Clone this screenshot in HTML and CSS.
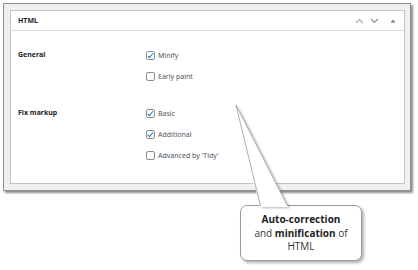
FILE: index.html
```html
<!DOCTYPE html>
<html lang="en">

<head>
    <meta charset="UTF-8">
    <title>HTML settings</title>
    <link rel="stylesheet" href="styles.css">
</head>

<body>
    <div class="stage">
        <div class="window">
            <div class="postbox">
                <div class="postbox-header">
                    <h2>HTML</h2>
                    <div class="handle-actions">
                        <svg width="9" height="6" viewBox="0 0 9 6"><polyline points="1,5 4.5,1.5 8,5" fill="none" stroke="#a7aaad" stroke-width="1.1"/></svg>
                        <svg width="9" height="6" viewBox="0 0 9 6"><polyline points="1,1 4.5,4.5 8,1" fill="none" stroke="#8c8f94" stroke-width="1.1"/></svg>
                        <svg width="6" height="4" viewBox="0 0 6 4"><polygon points="3,0.5 5.5,3.5 0.5,3.5" fill="#787c82"/></svg>
                    </div>
                </div>
                <div class="inside">
                    <div class="setting">
                        <div class="setting-label">General</div>
                        <div class="options">
                            <label class="option"><span class="box checked"></span>Minify</label>
                            <label class="option"><span class="box"></span>Early paint</label>
                        </div>
                    </div>
                    <div class="setting">
                        <div class="setting-label">Fix markup</div>
                        <div class="options">
                            <label class="option"><span class="box checked"></span>Basic</label>
                            <label class="option"><span class="box checked"></span>Additional</label>
                            <label class="option"><span class="box"></span>Advanced by 'Tidy'</label>
                        </div>
                    </div>
                </div>
            </div>
        </div>

        <div class="callout">
            <b>Auto-correction</b><br>
            and <b>minification</b> of<br>
            HTML
        </div>

        <!-- pointer of the callout, drawn over the window -->
        <svg class="pointer" width="418" height="270" viewBox="0 0 418 270">
            <defs>
                <filter id="tailShadow" x="-20%" y="-20%" width="160%" height="140%">
                    <feDropShadow dx="2" dy="1" stdDeviation="1.2" flood-color="#000" flood-opacity="0.28"/>
                </filter>
            </defs>
            <polygon points="236,105 260,207 288,207" fill="#fff" filter="url(#tailShadow)"/>
            <polygon points="236,105 260,207 288,207" fill="#fff"/>
            <polyline points="260.5,206 236,105 287.5,206" fill="none" stroke="#8a8a8a" stroke-width="0.7"/>
        </svg>
    </div>
</body>

</html>
```

FILE: styles.css
```css
* {
    box-sizing: border-box;
}

body,
html {
    margin: 0;
    padding: 0;
    background: #fff;
    overflow: hidden;
}

.stage {
    position: relative;
    width: 418px;
    height: 270px;
    padding: 3px 0 0 3px;
}

.window {
    width: 408px;
    height: 188px;
    padding: 6px 5px 6px 6px;
    background: #f0f0f1;
    border: 1px solid #8e8e8e;
    box-shadow: 2px 2px 2px rgba(0, 0, 0, 0.45);
}

.postbox {
    height: 174px;
    background: #fff;
    border: 1px solid #c3c4c7;
    font-family: "Noto Sans", "Open Sans", sans-serif;
    color: #1d2327;
}

.postbox-header {
    display: flex;
    align-items: center;
    justify-content: space-between;
    height: 20px;
    padding: 0 8px 0 7px;
    border-bottom: 1px solid #dcdcde;
}

.postbox-header h2 {
    margin: 0;
    font-size: 7px;
    font-weight: 700;
}

.handle-actions {
    display: flex;
    align-items: center;
    gap: 6px;
}

.handle-actions svg:last-child {
    margin-left: 5px;
}

.inside {
    padding: 19px 0 0 7px;
}

.setting {
    display: flex;
    margin-bottom: 27px;
}

.setting-label {
    width: 128px;
    font-size: 7px;
    font-weight: 700;
    line-height: 10px;
}

.options {
    display: flex;
    flex-direction: column;
    gap: 11px;
}

.option {
    display: flex;
    align-items: center;
    height: 10px;
    font-size: 7px;
    color: #50575e;
}

.box {
    position: relative;
    width: 9px;
    height: 9px;
    margin-right: 3px;
    border: 1px solid #8c8f94;
    border-radius: 2px;
    background: #fff;
}

.box.checked::after {
    content: "";
    position: absolute;
    left: 2px;
    top: 0px;
    width: 2px;
    height: 4.5px;
    border: solid #2271b1;
    border-width: 0 1.4px 1.4px 0;
    transform: rotate(40deg);
}

.callout {
    width: 122px;
    height: 56px;
    margin: 14px 0 0 237px;
    padding-top: 7px;
    background: #fff;
    border: 1px solid #9a9a9a;
    border-radius: 7px;
    box-shadow: 2px 2px 3px rgba(0, 0, 0, 0.3);
    font-family: "Open Sans", sans-serif;
    font-size: 10px;
    line-height: 13.5px;
    text-align: center;
    color: #333;
}

.callout b {
    color: #222;
}

.pointer {
    position: absolute;
    left: 0;
    top: 0;
    pointer-events: none;
}
```
